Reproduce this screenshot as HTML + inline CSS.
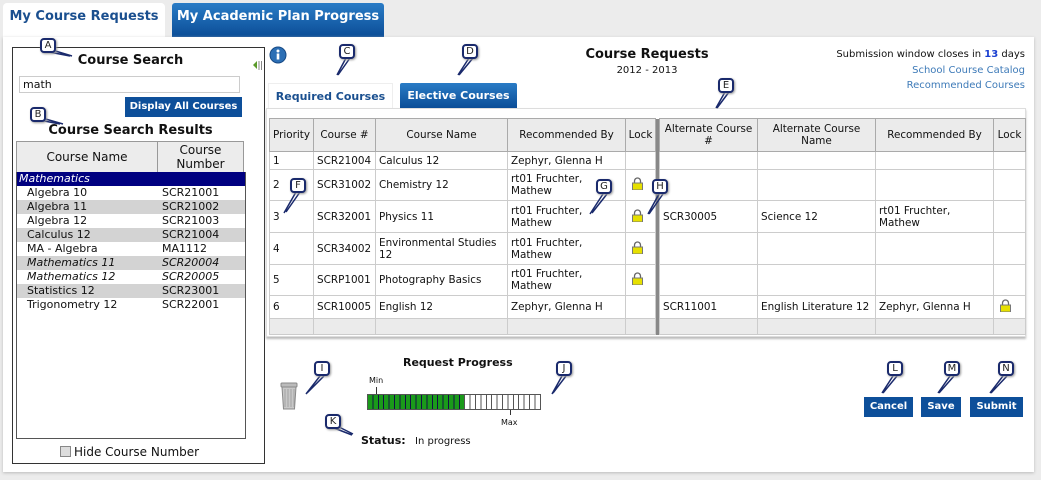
<!DOCTYPE html>
<html><head><meta charset="utf-8"><style>
*{box-sizing:border-box;margin:0;padding:0}
body{width:1041px;height:480px;background:#ececec;font-family:"DejaVu Sans","Liberation Sans",sans-serif;font-size:11px;color:#111;position:relative;overflow:hidden}
.abs{position:absolute}
.tab1{left:3px;top:3px;width:162px;height:36px;background:#fff;border-radius:4px 4px 0 0;color:#1a4f8f;font-weight:bold;font-size:13px;text-align:center;line-height:28px}
.tab2{left:172px;top:3px;width:212px;height:34px;background:linear-gradient(#2a7cc6,#0b4d97);border-radius:3px 3px 0 0;color:#fff;font-weight:bold;font-size:13px;text-align:center;line-height:28px}
.main{left:3px;top:37px;width:1031px;height:435px;background:#fff;box-shadow:0 1px 3px #bbb}
.left{left:12px;top:47px;width:253px;height:417px;border:1px solid #333}
.btn{background:#0d4f9a;color:#fff;font-weight:bold;font-size:10px;text-align:center}
.list .r{height:14px;line-height:14px;font-size:11px;position:relative}
.list .r span{position:absolute;left:10px}
.list .r b{position:absolute;left:145px;font-weight:normal}
.g{background:#d3d3d3}
table.t{position:absolute;border-collapse:collapse;table-layout:fixed;font-size:10.4px}
table.t td,table.t th{border:1px solid #ccc;padding:0 3px;vertical-align:middle;font-weight:normal;line-height:12px;white-space:normal}
table.t th{background:#ebebeb;border-color:#aaa;text-align:center}
.lock{display:inline-block;width:11px;height:13px;position:relative;margin-left:3px}
.call{position:absolute;width:16px;height:15px;border:2px solid #1a2a6c;border-radius:4px;background:#fff;font-size:10px;text-align:center;line-height:11px;color:#222;box-shadow:1px 1px 2px #999}
a{color:#3d7ab8;text-decoration:none}
</style></head><body>
<div class="abs tab1">My Course Requests</div>
<div class="abs tab2">My Academic Plan Progress</div>
<div class="abs main"></div>

<div class="abs left">
  <div class="abs" style="left:0;width:235px;top:5px;text-align:center;font-weight:bold;font-size:13px">Course Search</div>
  <div class="abs" style="left:240px;top:12px;width:10px;height:8px;"><svg width="10" height="9"><polygon points="0,4 4,0 4,8" fill="#5a9a2a"/><line x1="6" y1="0" x2="6" y2="9" stroke="#888"/><line x1="8.5" y1="0" x2="8.5" y2="9" stroke="#888"/></svg></div>
  <div class="abs" style="left:6px;top:28px;width:221px;height:17px;border:1px solid #ccc;padding-left:3px;line-height:15px">math</div>
  <div class="abs btn" style="left:112px;top:49px;width:117px;height:20px;line-height:20px">Display All Courses</div>
  <div class="abs" style="left:0;width:235px;top:75px;text-align:center;font-weight:bold;font-size:13px">Course Search Results</div>
  <div class="abs" style="left:3px;top:93px;width:228px;height:32px;background:#ececec;border:1px solid #999;font-size:12px">
    <div class="abs" style="left:0;width:141px;top:0;height:30px;line-height:30px;text-align:center;border-right:1px solid #999">Course Name</div>
    <div class="abs" style="left:141px;width:85px;top:1px;text-align:center;line-height:14px">Course<br>Number</div>
  </div>
  <div class="abs list" style="left:3px;top:124px;width:230px;height:267px;border:1px solid #555;border-top:none">
    <div class="r" style="background:#000080;color:#fff;font-style:italic"><span style="left:2px">Mathematics</span></div>
    <div class="r"><span>Algebra 10</span><b>SCR21001</b></div>
    <div class="r g"><span>Algebra 11</span><b>SCR21002</b></div>
    <div class="r"><span>Algebra 12</span><b>SCR21003</b></div>
    <div class="r g"><span>Calculus 12</span><b>SCR21004</b></div>
    <div class="r"><span>MA - Algebra</span><b>MA1112</b></div>
    <div class="r g" style="font-style:italic"><span>Mathematics 11</span><b>SCR20004</b></div>
    <div class="r" style="font-style:italic"><span>Mathematics 12</span><b>SCR20005</b></div>
    <div class="r g"><span>Statistics 12</span><b>SCR23001</b></div>
    <div class="r"><span>Trigonometry 12</span><b>SCR22001</b></div>
  </div>
  <div class="abs" style="left:47px;top:398px;width:11px;height:11px;border:1px solid #888;background:#ddd"></div>
  <div class="abs" style="left:61px;top:397px;font-size:12px">Hide Course Number</div>
</div>

<svg class="abs" style="left:269px;top:46px" width="18" height="18"><circle cx="9" cy="9" r="8" fill="#2c6fb5" stroke="#174a85"/><circle cx="9" cy="5" r="1.5" fill="#fff"/><rect x="7.7" y="7.5" width="2.6" height="6" fill="#fff"/></svg>
<div class="abs" style="left:547px;width:200px;top:47px;text-align:center;font-weight:bold;font-size:13px">Course Requests</div>
<div class="abs" style="left:547px;width:200px;top:65px;text-align:center;font-size:10px">2012 - 2013</div>
<div class="abs" style="right:16px;top:47px;text-align:right;font-size:10px;line-height:15.5px">Submission window closes in <b style="color:#1a3fd0">13</b> days<br><a>School Course Catalog</a><br><a>Recommended Courses</a></div>

<div class="abs" style="left:268px;top:83px;width:125px;height:27px;background:#fff;border:1px solid #eee;border-bottom:none;color:#1a4f8f;font-weight:bold;text-align:center;line-height:25px">Required Courses</div>
<div class="abs" style="left:400px;top:83px;width:117px;height:25px;background:linear-gradient(#2a7cc6,#0b4d97);color:#fff;font-weight:bold;text-align:center;line-height:25px;border-radius:2px 2px 0 0">Elective Courses</div>
<div class="abs" style="left:266px;top:108px;width:760px;height:229px;border:1px solid #ddd;box-shadow:0 2px 2px #bbb;background:#fff"></div>

<table class="t" style="left:269px;top:118px;width:756px">
<colgroup><col style="width:44px"><col style="width:62px"><col style="width:132px"><col style="width:118px"><col style="width:30px"><col style="width:4px"><col style="width:98px"><col style="width:118px"><col style="width:118px"><col style="width:32px"></colgroup>
<tr style="height:33px"><th style="padding:0 1px">Priority</th><th>Course #</th><th>Course Name</th><th>Recommended By</th><th style="padding:0 1px">Lock</th><td rowspan="8" style="background:#888;border:none;padding:0"></td><th>Alternate Course #</th><th>Alternate Course Name</th><th>Recommended By</th><th style="padding:0 1px">Lock</th></tr>
<tr style="height:18px"><td>1</td><td>SCR21004</td><td>Calculus 12</td><td>Zephyr, Glenna H</td><td></td><td></td><td></td><td></td><td></td></tr>
<tr style="height:31px"><td>2</td><td>SCR31002</td><td>Chemistry 12</td><td>rt01 Fruchter, Mathew</td><td><span class="lock"><svg width="11" height="13"><path d="M2.5 6V4a3 3 0 0 1 6 0v2" fill="none" stroke="#666" stroke-width="1.3"/><rect x="0.5" y="6" width="10" height="7" fill="#e6e000" stroke="#777"/></svg></span></td><td></td><td></td><td></td><td></td></tr>
<tr style="height:32px"><td>3</td><td>SCR32001</td><td>Physics 11</td><td>rt01 Fruchter, Mathew</td><td><span class="lock"><svg width="11" height="13"><path d="M2.5 6V4a3 3 0 0 1 6 0v2" fill="none" stroke="#666" stroke-width="1.3"/><rect x="0.5" y="6" width="10" height="7" fill="#e6e000" stroke="#777"/></svg></span></td><td>SCR30005</td><td>Science 12</td><td>rt01 Fruchter, Mathew</td><td></td></tr>
<tr style="height:32px"><td>4</td><td>SCR34002</td><td>Environmental Studies 12</td><td>rt01 Fruchter, Mathew</td><td><span class="lock"><svg width="11" height="13"><path d="M2.5 6V4a3 3 0 0 1 6 0v2" fill="none" stroke="#666" stroke-width="1.3"/><rect x="0.5" y="6" width="10" height="7" fill="#e6e000" stroke="#777"/></svg></span></td><td></td><td></td><td></td><td></td></tr>
<tr style="height:31px"><td>5</td><td>SCRP1001</td><td>Photography Basics</td><td>rt01 Fruchter, Mathew</td><td><span class="lock"><svg width="11" height="13"><path d="M2.5 6V4a3 3 0 0 1 6 0v2" fill="none" stroke="#666" stroke-width="1.3"/><rect x="0.5" y="6" width="10" height="7" fill="#e6e000" stroke="#777"/></svg></span></td><td></td><td></td><td></td><td></td></tr>
<tr style="height:23px"><td>6</td><td>SCR10005</td><td>English 12</td><td>Zephyr, Glenna H</td><td></td><td>SCR11001</td><td style="white-space:nowrap">English Literature 12</td><td>Zephyr, Glenna H</td><td><span class="lock"><svg width="11" height="13"><path d="M2.5 6V4a3 3 0 0 1 6 0v2" fill="none" stroke="#666" stroke-width="1.3"/><rect x="0.5" y="6" width="10" height="7" fill="#e6e000" stroke="#777"/></svg></span></td></tr>
<tr style="height:16px;background:#ebebeb"><td></td><td></td><td></td><td></td><td></td><td></td><td></td><td></td><td></td></tr>
</table>

<svg class="abs" style="left:279px;top:382px" width="20" height="29"><rect x="2" y="1" width="16" height="4" rx="1" fill="#bbb" stroke="#888"/><path d="M3 5h14l-1.5 22h-11z" fill="#c8c8c8" stroke="#888"/><path d="M6 7v18M9 7v18M12 7v18M15 7v18" stroke="#999" stroke-width="0.8"/></svg>
<div class="abs" style="left:403px;top:356px;font-weight:bold;font-size:11px">Request Progress</div>
<div class="abs" style="left:369px;top:376px;font-size:8px">Min</div>
<div class="abs" style="left:376px;top:387px;width:1px;height:7px;background:#333"></div>
<div class="abs" style="left:510px;top:409px;width:1px;height:6px;background:#333"></div>
<div class="abs" style="left:501px;top:418px;font-size:8px">Max</div>
<div class="abs" style="left:361px;top:434px;font-weight:bold;font-size:11px">Status:</div>
<div class="abs" style="left:415px;top:436px;font-size:10px">In progress</div>

<div class="abs btn" style="left:864px;top:397px;width:49px;height:20px;line-height:20px">Cancel</div>
<div class="abs btn" style="left:921px;top:397px;width:40px;height:20px;line-height:20px">Save</div>
<div class="abs btn" style="left:970px;top:397px;width:53px;height:20px;line-height:20px">Submit</div>

<svg class="abs" style="left:0;top:0;pointer-events:none" width="1041" height="480" fill="none" stroke="#1a2a6c" stroke-width="1.5">
<path d="M52 50L72 56M49 52L70 56"/><path d="M42 118L63 124M39 120L60 124"/>
<path d="M346 58L337 75M350 58L338 75"/><path d="M469 58L458 75M473 58L459 75"/>
<path d="M725 92L716 108M729 92L717 108"/><path d="M296 192L284 213M300 192L286 212"/>
<path d="M603 194L590 214M607 194L592 213"/><path d="M659 194L648 214M663 194L649 214"/>
<path d="M320 376L306 394M324 376L307 393"/><path d="M562 376L552 394M566 376L553 393"/>
<path d="M337 426L353 434M334 428L352 435"/>
<path d="M893 376L882 393M897 376L883 393"/><path d="M950 376L938 393M954 376L939 393"/><path d="M1003 376L990 393M1007 376L991 393"/>
</svg>
<div class="call" style="left:40px;top:38px">A</div>
<div class="call" style="left:30px;top:107px">B</div>
<div class="call" style="left:339px;top:44px">C</div>
<div class="call" style="left:462px;top:44px">D</div>
<div class="call" style="left:718px;top:78px">E</div>
<div class="call" style="left:290px;top:178px">F</div>
<div class="call" style="left:596px;top:179px">G</div>
<div class="call" style="left:652px;top:179px">H</div>
<div class="call" style="left:314px;top:361px">I</div>
<div class="call" style="left:556px;top:361px">J</div>
<div class="call" style="left:325px;top:414px">K</div>
<div class="call" style="left:887px;top:361px">L</div>
<div class="call" style="left:944px;top:361px">M</div>
<div class="call" style="left:998px;top:361px">N</div>
<div class="abs" style="left:367px;top:394px;width:174px;height:16px;background:repeating-linear-gradient(90deg,#555 0 1px,transparent 1px 5.4px)"></div>
<div class="abs" style="left:368px;top:395px;width:96px;height:14px;background:repeating-linear-gradient(90deg,#1a9a1a 0 4.4px,#114 4.4px 5.4px)"></div>
<div class="abs" style="left:367px;top:394px;width:174px;height:16px;border-top:1px solid #555;border-bottom:1px solid #555;border-right:1px solid #555"></div>
</body></html>
